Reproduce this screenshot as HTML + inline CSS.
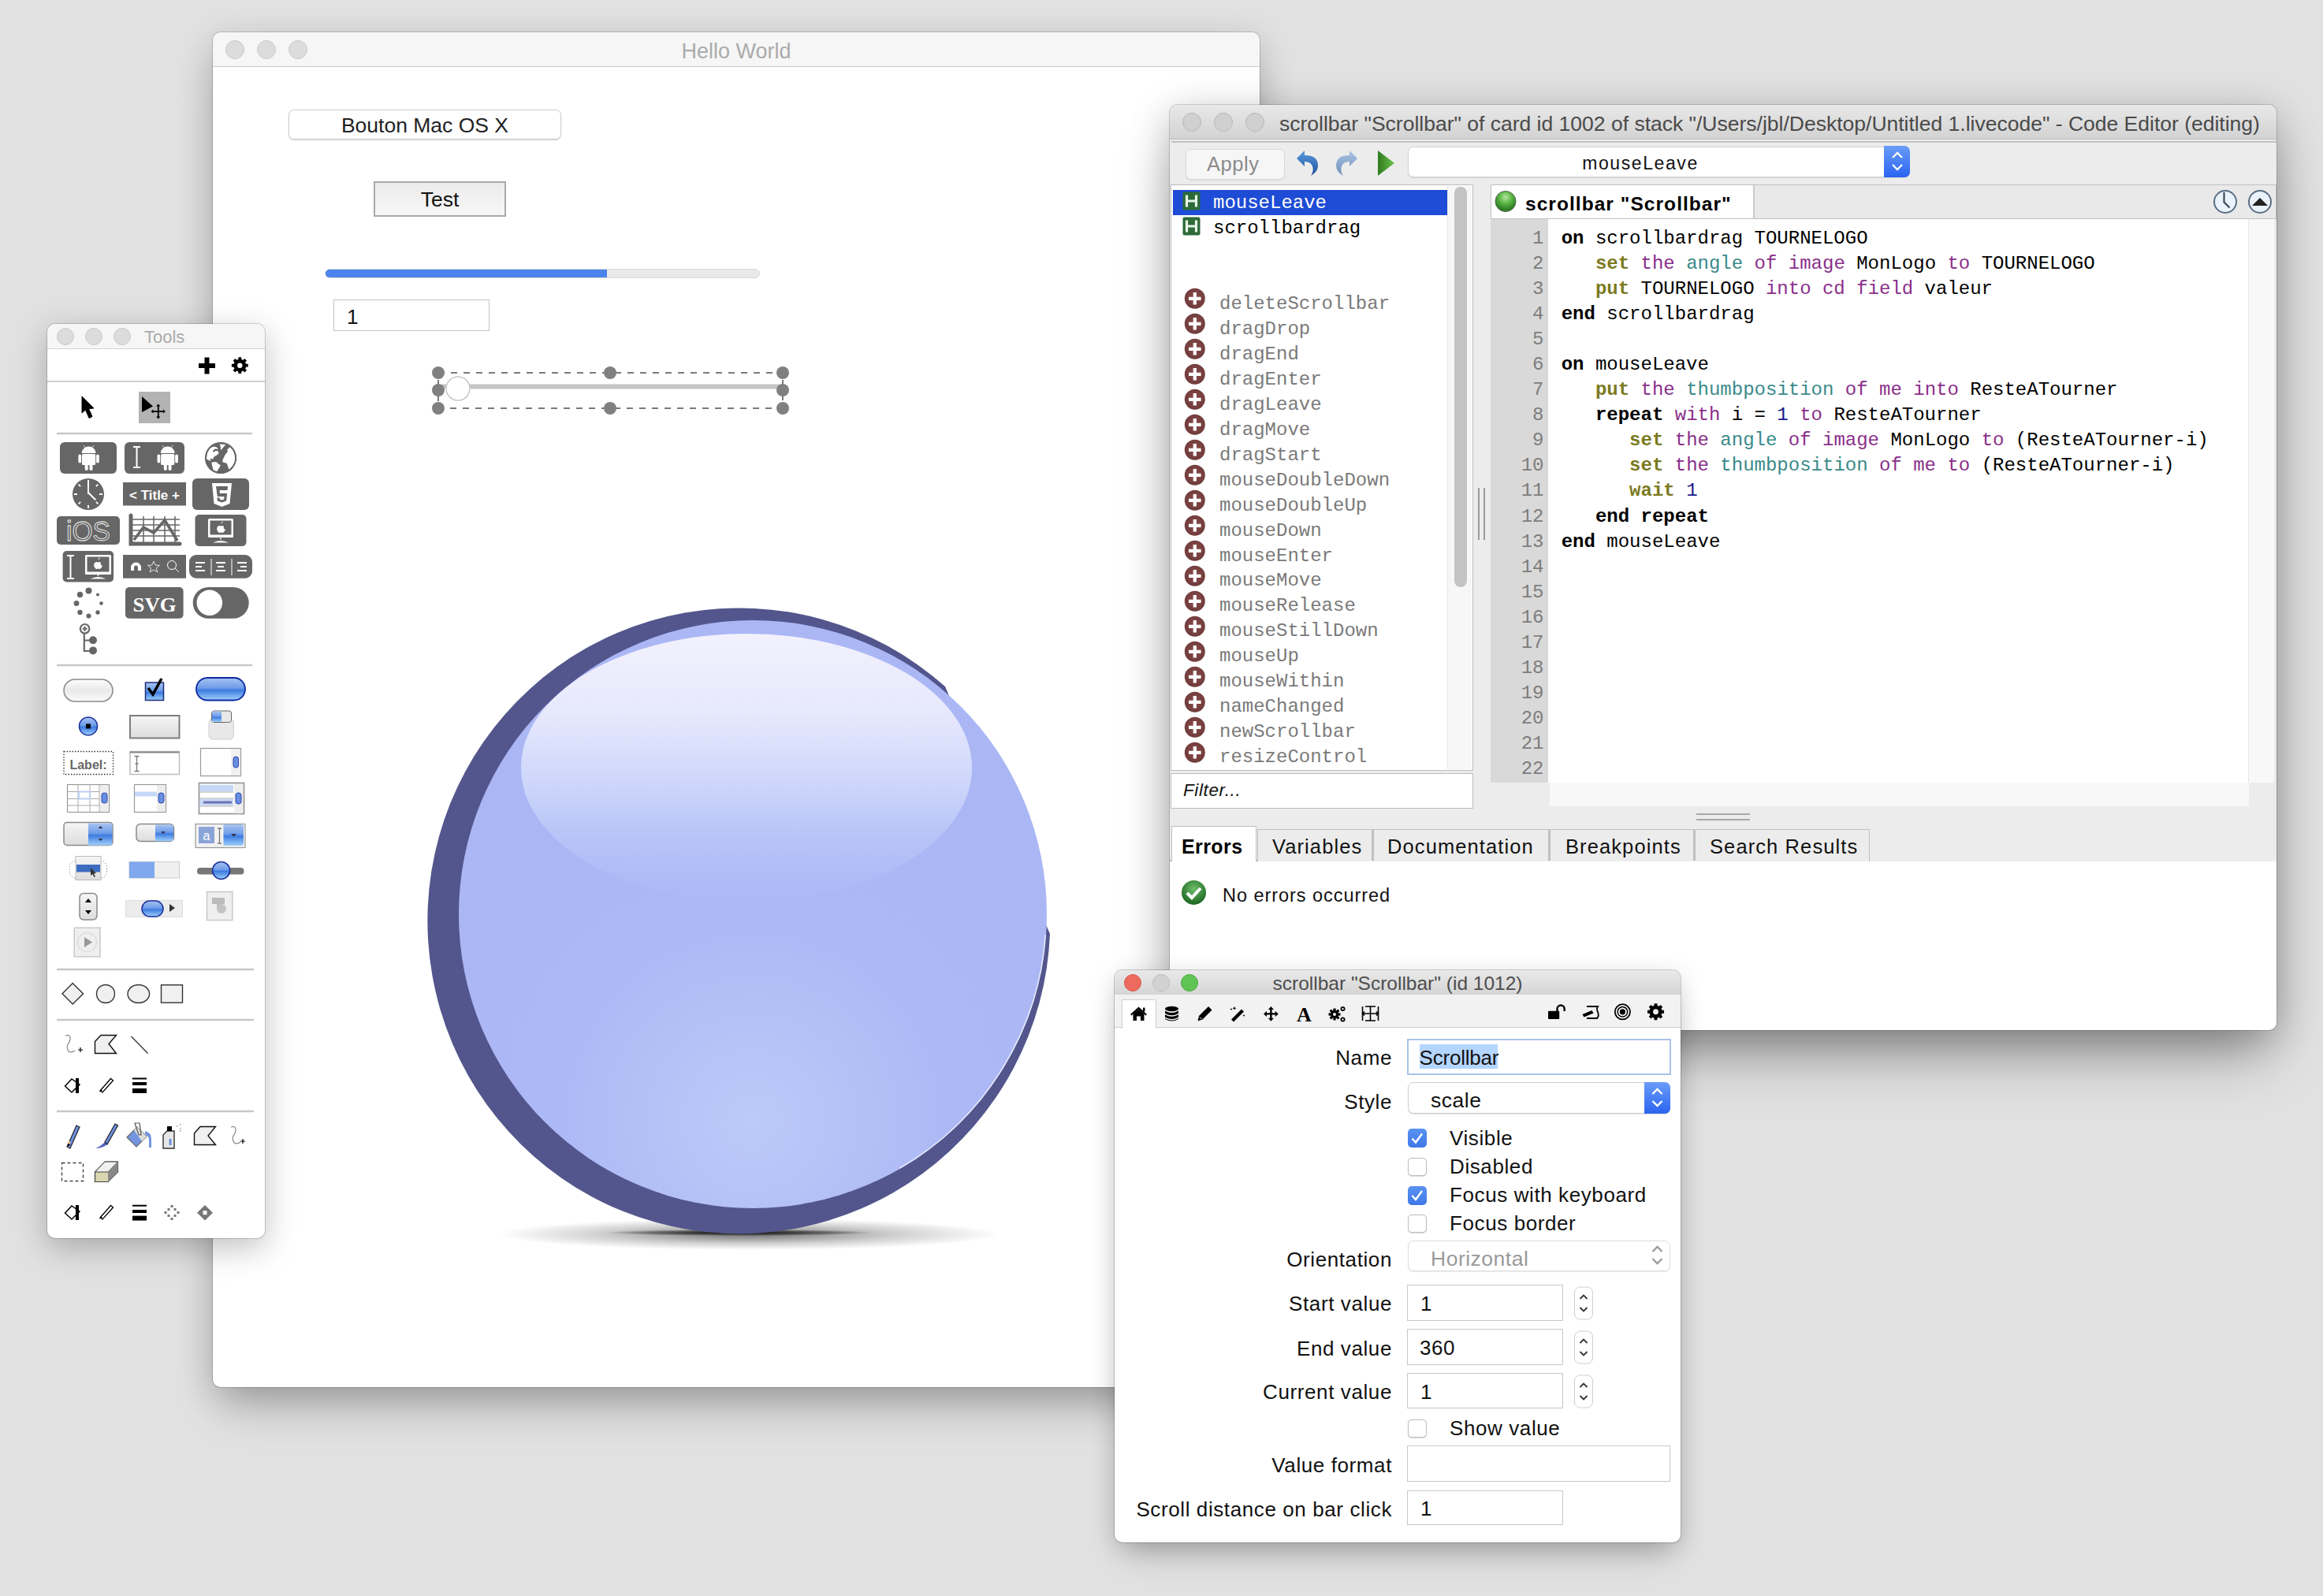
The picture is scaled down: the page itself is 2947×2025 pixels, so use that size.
<!DOCTYPE html>
<html><head><meta charset="utf-8">
<style>
*{box-sizing:border-box}
html,body{margin:0;padding:0}
body{width:2947px;height:2025px;background:#e1e1e1;position:relative;overflow:hidden;font-family:"Liberation Sans",sans-serif;color:#000}
.a{position:absolute}
.win{position:absolute;background:#fff;border-radius:10px;overflow:hidden}
.tl{position:absolute;border-radius:50%;background:#dcdcdc;border:1px solid #c9c9c9}
.t{position:absolute;white-space:nowrap;line-height:1}
.mono{font-family:"Liberation Mono",monospace}
.k1{color:#7b7a1f}.k2{color:#8a2f8a}.k3{color:#3a8a8a}.k4{color:#1a1a8c}
.sep{position:absolute;height:3px;background:#c8c8c8}
</style></head><body>

<!-- ============ HELLO WORLD WINDOW ============ -->
<div class="win" id="w1" style="left:270px;top:41px;width:1328px;height:1719px;box-shadow:0 0 0 1px rgba(0,0,0,.16),0 10px 44px rgba(0,0,0,.16),0 34px 54px -12px rgba(0,0,0,.22)">
  <div class="a" style="left:0;top:0;width:1328px;height:43.5px;background:#f6f6f6;border-bottom:1.5px solid #cbcbcb"></div>
  <div class="tl" style="left:16px;top:10px;width:24px;height:24px"></div>
  <div class="tl" style="left:56px;top:10px;width:24px;height:24px"></div>
  <div class="tl" style="left:96px;top:10px;width:24px;height:24px"></div>
  <div class="t" style="left:0;width:1328px;text-align:center;top:10.5px;font-size:27px;color:#ababab">Hello World</div>

  <!-- Bouton Mac OS X -->
  <div class="a" style="left:96px;top:98px;width:346px;height:38px;border-radius:7px;background:#fff;border:1px solid #cdcdcd;box-shadow:0 1px 1.5px rgba(0,0,0,.18)"></div>
  <div class="t" style="left:96px;width:346px;text-align:center;top:105px;font-size:26.5px;color:#222">Bouton Mac OS X</div>
  <!-- Test -->
  <div class="a" style="left:204px;top:189px;width:168px;height:45px;background:linear-gradient(#ececec,#f7f7f7);border:2px solid #a9a9a9"></div>
  <div class="t" style="left:204px;width:168px;text-align:center;top:199px;font-size:26.5px;color:#111">Test</div>
  <!-- progress -->
  <div class="a" style="left:142px;top:300px;width:552px;height:12px;border-radius:6px;background:#e9e9e9;border:1px solid #dadada;overflow:hidden">
    <div class="a" style="left:-1px;top:-1px;width:358px;height:12px;background:#4a84ec;border-radius:6px 0 0 6px"></div>
  </div>
  <!-- field -->
  <div class="a" style="left:153px;top:339px;width:198px;height:40px;border:1.5px solid #c4c4c4;background:#fff"></div>
  <div class="t" style="left:170px;top:348px;font-size:26px;color:#111">1</div>
  <!-- selected scrollbar -->
  <svg class="a" style="left:270px;top:419px" width="470" height="70" viewBox="540 460 470 70">
    <rect x="556" y="473" width="437" height="45" fill="none" stroke="#7a7a7a" stroke-width="2" stroke-dasharray="8 8"/>
    <line x1="560" y1="490.5" x2="992" y2="490.5" stroke="#c6c6c6" stroke-width="6"/>
    <line x1="556" y1="482" x2="556" y2="504" stroke="#7a7a7a" stroke-width="2"/>
    <line x1="993" y1="482" x2="993" y2="504" stroke="#7a7a7a" stroke-width="2"/>
    <g fill="#808080">
      <circle cx="556" cy="473" r="8"/><circle cx="774" cy="473" r="8"/><circle cx="993" cy="473" r="8"/>
      <circle cx="556" cy="495" r="8"/><circle cx="993" cy="495" r="8"/>
      <circle cx="556" cy="518" r="8"/><circle cx="774" cy="518" r="8"/><circle cx="993" cy="518" r="8"/>
    </g>
    <circle cx="581" cy="493" r="15" fill="#fff" stroke="#c8c8c8" stroke-width="1.5"/>
  </svg>
  <!-- sphere -->
  <svg class="a" style="left:200px;top:659px" width="900" height="920" viewBox="470 700 900 920">
    <defs>
      <radialGradient id="shd" cx="0.5" cy="0.5" r="0.5">
        <stop offset="0" stop-color="#000" stop-opacity=".55"/>
        <stop offset=".6" stop-color="#000" stop-opacity=".18"/>
        <stop offset="1" stop-color="#000" stop-opacity="0"/>
      </radialGradient>
      <radialGradient id="shd2" cx="0.5" cy="0.5" r="0.5">
        <stop offset="0" stop-color="#000" stop-opacity=".9"/>
        <stop offset=".7" stop-color="#000" stop-opacity=".35"/>
        <stop offset="1" stop-color="#000" stop-opacity="0"/>
      </radialGradient>
      <radialGradient id="lit" cx="0.5" cy="0.85" r="0.6">
        <stop offset="0" stop-color="#bccaf8"/>
        <stop offset=".55" stop-color="#adb9f5"/>
        <stop offset="1" stop-color="#abb7f5"/>
      </radialGradient>
      <linearGradient id="hil" x1="0" y1="0" x2="0" y2="1">
        <stop offset="0" stop-color="#f2f1fd"/>
        <stop offset=".3" stop-color="#e6e8fc"/>
        <stop offset=".6" stop-color="#c9d3fa"/>
        <stop offset="1" stop-color="#b0bdf7" stop-opacity=".15"/>
      </linearGradient>
    </defs>
    <ellipse cx="950" cy="1566" rx="318" ry="20" fill="url(#shd)"/>
    <ellipse cx="938" cy="1564" rx="170" ry="4" fill="url(#shd2)"/>
    <path d="M1332 1185 A395 397 0 1 1 1199 871 L1332 1185 Z" fill="#53568c"/>
    <circle cx="955" cy="1160" r="373" fill="url(#lit)"/>
    <ellipse cx="947" cy="974" rx="286" ry="170" fill="url(#hil)"/>
    <path d="M1326.4 1186.0 A372.3 372.3 0 0 1 1141.2 1482.4" fill="none" stroke="#fff" stroke-opacity=".75" stroke-width="1.5"/>
  </svg>
</div>

<!-- ============ TOOLS WINDOW ============ -->
<div class="win" id="w2" style="left:60px;top:411px;width:276px;height:1160px;box-shadow:0 12px 40px rgba(0,0,0,.25),0 0 0 1px rgba(0,0,0,.16)">
  <div class="a" style="left:0;top:0;width:276px;height:32px;background:#f6f6f6;border-bottom:1.5px solid #d4d4d4"></div>
  <div class="tl" style="left:12px;top:5px;width:22px;height:22px"></div>
  <div class="tl" style="left:48px;top:5px;width:22px;height:22px"></div>
  <div class="tl" style="left:84px;top:5px;width:22px;height:22px"></div>
  <div class="t" style="left:123px;top:6px;font-size:22px;color:#ababab">Tools</div>
  <svg class="a" style="left:0;top:0" width="276" height="1160" viewBox="60 411 276 1160">
    <defs>
      <linearGradient id="gw" x1="0" y1="0" x2="0" y2="1"><stop offset="0" stop-color="#fdfdfd"/><stop offset=".5" stop-color="#e9e9e9"/><stop offset="1" stop-color="#fafafa"/></linearGradient>
      <linearGradient id="gb" x1="0" y1="0" x2="0" y2="1"><stop offset="0" stop-color="#a9c4f2"/><stop offset=".45" stop-color="#6f9de8"/><stop offset=".55" stop-color="#3d7be0"/><stop offset="1" stop-color="#9fd0fb"/></linearGradient>
      <linearGradient id="gg" x1="0" y1="0" x2="0" y2="1"><stop offset="0" stop-color="#f6f6f6"/><stop offset="1" stop-color="#dcdcdc"/></linearGradient>
    </defs>
    <!-- toolbar -->
    <line x1="60" y1="484" x2="336" y2="484" stroke="#d0d0d0" stroke-width="2"/>
    <path d="M259.5 453.5h6v7.5h7.5v6h-7.5v7.5h-6v-7.5h-7.5v-6h7.5z" fill="#000"/>
    <path d="M312.06 461.77 L314.72 461.78 L314.72 465.62 L312.06 465.63 L311.15 467.83 L313.03 469.71 L310.31 472.43 L308.43 470.55 L306.23 471.46 L306.22 474.12 L302.38 474.12 L302.37 471.46 L300.17 470.55 L298.29 472.43 L295.57 469.71 L297.45 467.83 L296.54 465.63 L293.88 465.62 L293.88 461.78 L296.54 461.77 L297.45 459.57 L295.57 457.69 L298.29 454.97 L300.17 456.85 L302.37 455.94 L302.38 453.28 L306.22 453.28 L306.23 455.94 L308.43 456.85 L310.31 454.97 L313.03 457.69 L311.15 459.57Z M307.50 463.70 A3.2 3.2 0 1 0 301.10 463.70 A3.2 3.2 0 1 0 307.50 463.70Z" fill="#000" fill-rule="evenodd"/>
    <!-- pointer tools -->
    <path d="M104 503 L104 524 L108.5 520 L113 530.5 L117 528.5 L112.5 518.5 L119 518 Z" fill="#000" stroke="#000" stroke-width="1"/>
    <rect x="176" y="497" width="40" height="40" fill="#b3b3b3"/>
    <path d="M180 503 L180 523 L194 515.5 Z" fill="#000"/>
    <g stroke="#000" stroke-width="1.8" fill="none"><line x1="200.8" y1="514" x2="200.8" y2="530"/><line x1="193" y1="522" x2="208.6" y2="522"/></g><path d="M200.8 512.5l-2.6 3h5.2zM200.8 531.5l-2.6-3h5.2zM191.5 522l3-2.6v5.2zM210 522l-3-2.6v5.2z" fill="#000"/>
    <line x1="72" y1="550" x2="320" y2="550" stroke="#c8c8c8" stroke-width="2.5"/>
    <!-- widgets row1 -->
    <g fill="#666">
      <rect x="76" y="561" width="72" height="40" rx="6"/>
      <rect x="158" y="561" width="76" height="40" rx="6"/>
      <circle cx="280" cy="581" r="20"/>
      <circle cx="112" cy="627" r="20"/>
      <rect x="156" y="612" width="80" height="29.5"/>
      <rect x="244" y="607" width="72" height="40" rx="6"/>
      <rect x="72" y="655" width="80" height="36" rx="5"/>
      <rect x="247.5" y="653" width="65" height="40" rx="5"/>
      <rect x="79.6" y="699" width="64.5" height="39.5" rx="5"/>
      <rect x="156" y="704" width="80" height="29.7"/>
      <rect x="240" y="704" width="80" height="29.7" rx="9"/>
      <rect x="159" y="745" width="73.6" height="39.7" rx="5"/>
      <rect x="244.7" y="745" width="71" height="39.7" rx="19.8"/>
    </g>
    <g fill="#fff">
      <!-- android 1 -->
      <path d="M103.69999999999999 575 a8.9 8.4 0 0 1 17.8 0z"/><path d="M107.6 567.5 l-1.5-2.5 M117.6 567.5 l1.5-2.5" stroke="#fff" stroke-width=".8"/><rect x="104.0" y="576" width="17.2" height="14" rx="1.5"/><rect x="99.39999999999999" y="576.5" width="3.7" height="11" rx="1.8"/><rect x="122.1" y="576.5" width="3.7" height="11" rx="1.8"/><rect x="107.69999999999999" y="588" width="4" height="9" rx="2"/><rect x="113.5" y="588" width="4" height="9" rx="2"/>
      <!-- android 2 -->
      <path d="M203.79999999999998 575 a8.9 8.4 0 0 1 17.8 0z"/><path d="M207.7 567.5 l-1.5-2.5 M217.7 567.5 l1.5-2.5" stroke="#fff" stroke-width=".8"/><rect x="204.1" y="576" width="17.2" height="14" rx="1.5"/><rect x="199.5" y="576.5" width="3.7" height="11" rx="1.8"/><rect x="222.2" y="576.5" width="3.7" height="11" rx="1.8"/><rect x="207.79999999999998" y="588" width="4" height="9" rx="2"/><rect x="213.6" y="588" width="4" height="9" rx="2"/>
      <path d="M169 566h9v2h-3.5v24h3.5v2h-9v-2h3.5v-24h-3.5z"/>
      <!-- globe details -->
      <path d="M261.74 580.69 L262.83 573.80 L266.59 568.16 L271.60 566.59 L275.36 567.84 L276.93 569.72 L272.54 569.41 L270.04 571.92 L270.35 574.11 L272.54 572.54 L275.05 571.92 L276.93 572.86 L277.56 575.36 L275.36 577.24 L271.60 579.44 L269.72 582.88 L268.16 581.63 L266.28 582.57 L267.84 585.08 L264.40 583.82 L262.05 582.57Z M278.50 563.46 L286.33 564.09 L280.06 571.60 L279.75 566.28Z M291.34 566.90 L295.73 571.29 L298.55 578.81 L297.92 586.33 L295.73 591.03 L290.40 595.73 L287.89 587.89 L282.26 586.33 L282.57 583.20 L285.70 576.93 L289.15 572.54 L287.89 571.29Z M268.47 586.64 L272.54 586.02 L275.68 586.64 L276.93 588.83 L279.75 590.09 L278.81 592.59 L275.05 598.23 L270.66 596.67 L268.78 589.46Z" fill="#fff"/>
      <circle cx="280.06" cy="581" r="18.9" fill="none" stroke="#666" stroke-width="1.8"/>
      <!-- clock -->
      <rect x="111" y="609" width="2" height="18"/><path d="M111.5 626 l9 9 l1.5-1.5 l-9-9z"/>
      <rect x="111" y="641" width="2" height="4"/><rect x="94" y="626" width="4" height="2"/><rect x="126" y="626" width="4" height="2"/><line x1="121.90" y1="636.90" x2="124.37" y2="639.37" stroke="#fff" stroke-width="1.8"/><line x1="102.10" y1="636.90" x2="99.63" y2="639.37" stroke="#fff" stroke-width="1.8"/><line x1="102.10" y1="617.10" x2="99.63" y2="614.63" stroke="#fff" stroke-width="1.8"/><line x1="121.90" y1="617.10" x2="124.37" y2="614.63" stroke="#fff" stroke-width="1.8"/>
      <!-- html5 -->
      <path d="M269 613h25l-2.5 26l-10 4l-10-4z" fill="#fff"/>
    </g>
    <path d="M274 617h15l-.5 5h-10l.4 4h9.2l-.9 9.5l-5.7 2l-5.7-2l-.4-4h3.2l.2 2l2.7 1l2.7-1l.3-3.5h-8.7z" fill="#666"/>
    <text x="196" y="634" font-family="Liberation Sans" font-weight="bold" font-size="17" fill="#fff" text-anchor="middle">&lt; Title +</text>
    <text x="112" y="686" font-family="Liberation Sans" font-size="35" fill="none" stroke="#fff" stroke-width=".8" text-anchor="middle" textLength="56" lengthAdjust="spacingAndGlyphs">iOS</text>
    <!-- chart -->
    <g stroke="#666" fill="none">
      <path d="M166 654 V690 H228" stroke-width="5" stroke-linecap="round"/>
      <path d="M168 659H228 M168 666H228 M168 673H228 M168 680H228 M182 655V688 M195 655V688 M209 655V688 M222 655V688" stroke-width="1.5"/>
      <path d="M170 685 L182 669 L195 676 L209 660 L225 686" stroke-width="3.5"/>
    </g>
    <!-- monitor 1 -->
    <g fill="#fff">
      <rect x="264" y="658" width="32" height="24" rx="1.5"/><path d="M270 688.5 q10-5 20 0z"/><circle cx="280" cy="683.5" r="1"/>
    </g>
    <rect x="266.5" y="660.5" width="27" height="18" fill="#666"/>
    <path d="M280 664 q2-2 3-3 q0 2 -2 3 z M276 668 q4-2 4 0 q1-2 4 0 q-1 3 2 4 q-2 4-4 4 q-2-1-3 0 q-3 0-4-5z" fill="#fff"/>
    <!-- I + monitor -->
    <path d="M85 704h9v2h-3.5v27h3.5v2h-9v-2h3.5v-27h-3.5z" fill="#fff"/>
    <rect x="108" y="704" width="33" height="25" rx="1.5" fill="#fff"/><path d="M114.5 734.5 q10-5 20 0z" fill="#fff"/><circle cx="124.5" cy="729.8" r="1" fill="#fff"/>
    <rect x="110.5" y="706.5" width="28" height="19" fill="#666"/>
    <path d="M124 710 q2-2 3-3 q0 2 -2 3 z M120 714 q4-2 4 0 q1-2 4 0 q-1 3 2 4 q-2 4-4 4 q-2-1-3 0 q-3 0-4-5z" fill="#fff"/>
    <!-- icons box -->
    <path d="M166 724 v-4 a6.5 6.5 0 0 1 13 0 v4 h-4 v-4 a2.5 2.5 0 0 0 -5 0 v4z" fill="#fff"/>
    <path d="M195 712 l2.2 5 5.3.3 -4.1 3.4 1.4 5.2 -4.8-3 -4.8 3 1.4-5.2 -4.1-3.4 5.3-.3z" fill="none" stroke="#fff" stroke-width=".8"/>
    <circle cx="218" cy="717" r="5.5" fill="none" stroke="#fff" stroke-width="1"/><line x1="222" y1="721" x2="227" y2="726" stroke="#fff" stroke-width="1"/>
    <!-- alignment -->
    <g fill="#fff">
      <rect x="248" y="713" width="12" height="2"/><rect x="248" y="718" width="8" height="2"/><rect x="248" y="723" width="12" height="2"/>
      <rect x="267.5" y="709" width="1" height="21"/>
      <rect x="274" y="713" width="12" height="2"/><rect x="276" y="718" width="8" height="2"/><rect x="274" y="723" width="12" height="2"/>
      <rect x="293.5" y="709" width="1" height="21"/>
      <rect x="301" y="713" width="12" height="2"/><rect x="305" y="718" width="8" height="2"/><rect x="301" y="723" width="12" height="2"/>
    </g>
    <!-- spinner -->
    <g fill="#666">
      <circle cx="112.5" cy="749.5" r="4"/><circle cx="101.5" cy="754.5" r="3.7"/><circle cx="97" cy="765.5" r="3.4"/><circle cx="101.5" cy="777" r="3.2"/><circle cx="112.5" cy="781.5" r="3"/><circle cx="124" cy="777" r="2.7"/><circle cx="128.5" cy="765.5" r="2.3"/><circle cx="124" cy="754.5" r="2"/>
    </g>
    <text x="196" y="776" font-family="Liberation Serif" font-weight="bold" font-size="25" fill="#fff" text-anchor="middle" textLength="55" lengthAdjust="spacingAndGlyphs">SVG</text>
    <circle cx="265.8" cy="764.8" r="16.3" fill="#fff"/>
    <!-- tree -->
    <g stroke="#666" fill="none" stroke-width="2.2">
      <circle cx="107.6" cy="797.8" r="5.8"/>
      <path d="M106.8 804 V826 H116 M106.8 812.5 H116"/>
    </g>
    <path d="M104.5 797.8h6.2M107.6 794.7v6.2" stroke="#666" stroke-width="2"/>
    <circle cx="118" cy="812.3" r="5" fill="#666"/><circle cx="118" cy="825.4" r="5" fill="#666"/>
    <line x1="72" y1="844" x2="320" y2="844" stroke="#c8c8c8" stroke-width="2.5"/>

    <!-- classic controls -->
    <rect x="81" y="862" width="62" height="28" rx="14" fill="url(#gw)" stroke="#8a8a8a" stroke-width="1.5"/>
    <rect x="184.5" y="866" width="23" height="22.5" fill="url(#gb)" stroke="#1a2f7a" stroke-width="1.5"/>
    <path d="M188 873 l6 8 l11-20" fill="none" stroke="#000" stroke-width="3.5"/>
    <rect x="249" y="860" width="62" height="28.5" rx="14" fill="url(#gb)" stroke="#0b2aa0" stroke-width="1.8"/>
    <circle cx="112" cy="921.4" r="11.5" fill="url(#gb)" stroke="#1a2f9a" stroke-width="1.5"/><rect x="109" y="918.4" width="6" height="6" fill="#000"/>
    <rect x="165" y="908" width="62.5" height="28.5" fill="url(#gg)" stroke="#7d7d7d" stroke-width="2"/>
    <rect x="265" y="912" width="31.5" height="26" rx="5" fill="#e8e8e8" stroke="#d0d0d0"/>
    <rect x="268.5" y="902" width="25" height="14.5" rx="3" fill="#e8e8e8" stroke="#666" stroke-width="1"/><rect x="269" y="902.5" width="12" height="13.5" fill="url(#gb)"/>
    <rect x="81" y="953.5" width="62.5" height="29" fill="none" stroke="#333" stroke-width="1.3" stroke-dasharray="1.5 2"/>
    <text x="112" y="976" font-family="Liberation Sans" font-weight="bold" font-size="16" fill="#666" text-anchor="middle">Label:</text>
    <rect x="165" y="953.5" width="62.5" height="29" fill="#fff" stroke="#bdbdbd" stroke-width="1.5"/><line x1="165" y1="954.5" x2="227.5" y2="954.5" stroke="#888" stroke-width="2"/>
    <path d="M170.5 959.5h6M173.5 959.5v19M170.5 978.5h6M171.5 969h4" stroke="#777" stroke-width="1.3" fill="none"/>
    <rect x="254.5" y="949.5" width="51" height="35" fill="#fff" stroke="#999" stroke-width="1.2"/><rect x="293" y="950" width="12" height="34" fill="#f0f0f0"/><rect x="296" y="960" width="6.5" height="14" rx="3" fill="#6a8ee0" stroke="#2a4ab0"/>
    <!-- table -->
    <rect x="85.5" y="995.5" width="53" height="35" fill="#fff" stroke="#999" stroke-width="1.2"/>
    <path d="M85.5 1004.5H126 M85.5 1013.5H126 M85.5 1022H126 M99 995.5V1030.5 M114 995.5V1030.5 M126 995.5V1030.5" stroke="#aaa" stroke-width="1"/>
    <rect x="100" y="1004.5" width="14" height="9" fill="none" stroke="#bcd0f5" stroke-width="2"/>
    <rect x="127" y="996" width="11" height="34" fill="#eee"/><rect x="129" y="1006" width="7" height="13" rx="3" fill="#6a8ee0" stroke="#2a4ab0"/>
    <rect x="170.5" y="995.5" width="40" height="35" fill="#fff" stroke="#999" stroke-width="1.2"/><rect x="171" y="1004.5" width="28" height="6" fill="#c6d8f8"/>
    <rect x="199" y="996" width="11" height="34" fill="#eee"/><rect x="201" y="1006" width="7" height="13" rx="3" fill="#6a8ee0" stroke="#2a4ab0"/>
    <rect x="252.5" y="993.5" width="57" height="39" fill="#fff" stroke="#999" stroke-width="1.8"/>
    <rect x="254" y="996" width="42" height="8" fill="#c6d8f8"/><rect x="253" y="1014" width="43" height="8" fill="#c6d8f8"/><rect x="258" y="1016.5" width="36" height="3" fill="#7070b0"/>
    <path d="M253 1005H296 M253 1013H296 M253 1023H296" stroke="#aaa"/>
    <rect x="297" y="995" width="11" height="37" fill="#eee"/><rect x="299" y="1006" width="7" height="14" rx="3" fill="#6a8ee0" stroke="#2a4ab0"/>
    <!-- row5 -->
    <rect x="81" y="1043.5" width="62" height="29" rx="4" fill="url(#gg)" stroke="#8a8a8a" stroke-width="1.5"/>
    <path d="M112 1044.5h27a3.5 3.5 0 0 1 3.5 3.5v21a3.5 3.5 0 0 1-3.5 3.5h-27z" fill="url(#gb)"/>
    <path d="M124.5 1051l3-3 3 3zM124.5 1064l3 3 3-3z" fill="#334"/>
    <rect x="173" y="1045.5" width="47.5" height="22" rx="5" fill="url(#gg)" stroke="#8a8a8a" stroke-width="1.5"/>
    <path d="M197 1046.3h19.5a3.5 3.5 0 0 1 3.5 3.5v14a3.5 3.5 0 0 1-3.5 3.5h-19.5z" fill="url(#gb)"/>
    <path d="M204 1055h6l-3 3z" fill="#334"/>
    <rect x="248" y="1045.5" width="63" height="30" fill="#f2f2f2" stroke="#999" stroke-width="1.2"/>
    <rect x="252" y="1049" width="20" height="21" fill="#8aa4d8"/><text x="262" y="1066" font-family="Liberation Sans" font-size="16" fill="#fff" text-anchor="middle">a</text>
    <path d="M276 1051h5M278.5 1051v19M276 1070h5" stroke="#777" stroke-width="1.3"/>
    <path d="M283.5 1046h22a3.5 3.5 0 0 1 3.5 3.5v20a3.5 3.5 0 0 1-3.5 3.5h-22z" fill="url(#gb)"/>
    <path d="M293 1058h7l-3.5 3.5z" fill="#334"/>
    <!-- row6 -->
    <rect x="88.3" y="1092" width="47.2" height="22" rx="8" fill="none" stroke="#555" stroke-width="1" stroke-dasharray="1 2.5"/>
    <rect x="96" y="1086.5" width="32" height="30" fill="url(#gg)" stroke="#bbb"/>
    <rect x="97" y="1097" width="30" height="9.5" fill="#3c6cc0"/>
    <path d="M115 1101 v10 l2.5-2 2 4 1.5-.8 -2-3.8 3-.4z" fill="#333"/>
    <rect x="164" y="1093.5" width="63.5" height="20.5" fill="#efefef" stroke="#ccc"/>
    <rect x="164" y="1093.5" width="32" height="20.5" fill="#7fa8ee"/>
    <rect x="250" y="1101" width="59.5" height="8.5" rx="4" fill="#777"/>
    <circle cx="280.6" cy="1104.4" r="11" fill="url(#gb)" stroke="#1a2f9a" stroke-width="1.5"/>
    <!-- row7 -->
    <rect x="101" y="1133.5" width="22" height="33.5" rx="5" fill="url(#gg)" stroke="#8a8a8a" stroke-width="1.5"/>
    <path d="M108 1145l4-5 4 5zM108 1155l4 5 4-5z" fill="#000"/>
    <rect x="159.5" y="1142.4" width="72" height="21" fill="#ececec" stroke="#ddd"/>
    <rect x="180" y="1143" width="27" height="20" rx="10" fill="url(#gb)" stroke="#1a2f9a" stroke-width="1.5"/>
    <path d="M215 1147v10l7-5z" fill="#333"/>
    <rect x="262.5" y="1131.5" width="32.3" height="36" fill="#efefef" stroke="#c8c8c8" stroke-width="1.5"/>
    <path d="M269 1139h16v8h-4v5h-6v-5h-6z" fill="#bbb"/><circle cx="281" cy="1153" r="6" fill="#c4c4c4"/>
    <rect x="94.2" y="1177.2" width="32.8" height="36.6" fill="#efefef" stroke="#c8c8c8" stroke-width="1.5"/>
    <circle cx="110.5" cy="1195.5" r="12" fill="none" stroke="#ddd" stroke-width="1.5"/><path d="M107 1189v13l10-6.5z" fill="#999"/>
    <line x1="72" y1="1230" x2="322" y2="1230" stroke="#c8c8c8" stroke-width="2.5"/>
    <!-- shapes -->
    <g fill="#f0f0f0" stroke="#333" stroke-width="1.4">
      <path d="M92.2 1247.5 L105.5 1260.7 L92.2 1274 L79 1260.7Z"/>
      <circle cx="134" cy="1261" r="11.5"/>
      <ellipse cx="175.8" cy="1261" rx="13.8" ry="11.5"/>
      <rect x="204.5" y="1249.7" width="27" height="22.5"/>
    </g>
    <line x1="72" y1="1294" x2="322" y2="1294" stroke="#c8c8c8" stroke-width="2.5"/>
    <path d="M83 1314 q6-2 6 3 q0 5-3 8 q-2 4 1 9 q4 2 8-1" fill="none" stroke="#888" stroke-width="1.2"/>
    <path d="M99 1332h6M102 1329v6" stroke="#000" stroke-width="1.2"/>
    <path d="M120.5 1321.5 L128 1313.5 H147.5 L138 1324.5 L147.5 1336.5 H120.5Z" fill="#f0f0f0" stroke="#111" stroke-width="1.4"/>
    <line x1="166.5" y1="1315" x2="187.5" y2="1336.5" stroke="#444" stroke-width="1.6"/>
    <path d="M82.5 1378 L91 1369 L101 1376 L91 1386Z" fill="none" stroke="#000" stroke-width="1.5"/><path d="M96 1368h4v19h-4z" fill="#000"/>
    <path d="M127 1384 L140.5 1368.5 L143.5 1371 L130 1386Z" fill="#fff" stroke="#000" stroke-width="1.3"/><path d="M126 1385.5l2-3.5 2 2z" fill="#000"/>
    <rect x="168" y="1367.5" width="18" height="2" fill="#000"/><rect x="168" y="1373" width="18" height="4" fill="#000"/><rect x="168" y="1381" width="18" height="6" fill="#000"/>
    <line x1="72" y1="1410" x2="322" y2="1410" stroke="#c8c8c8" stroke-width="2.5"/>
    <!-- paint tools -->
    <path d="M85 1455 L97 1428 L101 1430 L89 1457Z" fill="#6f8fe0" stroke="#222" stroke-width="1.2"/><path d="M85 1455l1.5-4 3 1.3z" fill="#000"/><rect x="86" y="1448" width="3" height="3" fill="#f3c08a"/>
    <path d="M121 1457 q6-2 12-8 l3 3 q-6 5-15 5z" fill="#5060c0"/><path d="M133 1449 L146 1426 L149.5 1428 L136 1452Z" fill="#6f8fe0" stroke="#222" stroke-width="1.2"/>
    <path d="M161 1443 L174 1430 L186 1442 L173 1455Z" fill="#7395e0" stroke="#666" stroke-width="1.2"/><path d="M170 1434 L174 1430 L186 1442 L180 1448Z" fill="#ddd"/><path d="M171 1425h6l2 15h-3z" fill="none" stroke="#555" stroke-width="1.2"/><path d="M184 1435 q8 2 8 10 v11 h-3 v-10 q0-5-5-6z" fill="#7395e0"/>
    <path d="M207 1457 V1440 L212 1435 H221 V1457Z" fill="#e6e6e6" stroke="#333" stroke-width="1.4"/><rect x="212" y="1429" width="6" height="6" fill="#000"/><rect x="214.5" y="1445" width="3" height="8" fill="#6f8fe0"/>
    <g fill="#999"><rect x="224" y="1428" width="1.5" height="1.5"/><rect x="228" y="1426" width="1.5" height="1.5"/><rect x="228" y="1431" width="1.5" height="1.5"/><rect x="228" y="1434" width="1.5" height="1.5"/></g>
    <path d="M246.5 1438 L254 1429.5 H273.5 L264 1441 L273.5 1452.5 H246.5Z" fill="#f0f0f0" stroke="#111" stroke-width="1.4"/>
    <path d="M293 1430 q6-2 6 3 q0 5-3 8 q-2 4 1 9 q4 2 8-1" fill="none" stroke="#888" stroke-width="1.2"/><path d="M305 1448h6M308 1445v6" stroke="#000" stroke-width="1.2"/>
    <rect x="78.5" y="1475.5" width="27" height="23" fill="none" stroke="#444" stroke-width="1.4" stroke-dasharray="4 3"/>
    <path d="M120.5 1487 L133 1474 H149.5 V1487 L137 1499.5 H120.5Z" fill="#d9d6b0" stroke="#444" stroke-width="1.2"/><path d="M120.5 1487 L133 1474 H149.5 L137 1487Z" fill="#f0f0f0" stroke="#444" stroke-width="1"/><path d="M137 1487 L149.5 1474 V1487 L137 1499.5Z" fill="#888"/>
    <path d="M82.5 1539 L91 1530 L101 1537 L91 1547Z" fill="none" stroke="#000" stroke-width="1.5"/><path d="M96 1529h4v19h-4z" fill="#000"/>
    <path d="M127 1545 L140.5 1529.5 L143.5 1532 L130 1547Z" fill="#fff" stroke="#000" stroke-width="1.3"/><path d="M126 1546.5l2-3.5 2 2z" fill="#000"/>
    <rect x="168" y="1528.7" width="18" height="2" fill="#000"/><rect x="168" y="1535" width="18" height="4" fill="#000"/><rect x="168" y="1542.6" width="18" height="6" fill="#000"/>
    <g fill="#777"><rect x="216.5" y="1529" width="3" height="3"/><rect x="212.5" y="1533" width="3" height="3"/><rect x="220.5" y="1533" width="3" height="3"/><rect x="208.5" y="1537" width="3" height="3"/><rect x="224.5" y="1537" width="3" height="3"/><rect x="212.5" y="1541" width="3" height="3"/><rect x="220.5" y="1541" width="3" height="3"/><rect x="216.5" y="1545" width="3" height="3"/></g>
    <path d="M260 1529 L270 1538.7 L260 1548.5 L250 1538.7Z" fill="#777"/><rect x="257.5" y="1536.2" width="5" height="5" fill="#fff"/>
  </svg>
</div>

<!-- ============ CODE EDITOR WINDOW ============ -->
<div class="win" id="w3" style="left:1484px;top:133px;width:1404px;height:1174px;background:#ececec;box-shadow:0 0 0 1px rgba(0,0,0,.16),0 10px 50px rgba(0,0,0,.22),0 42px 70px -14px rgba(0,0,0,.34)">
  <div class="a" style="left:0;top:0;width:1404px;height:44px;background:linear-gradient(#e8e8e8,#d3d3d3);border-bottom:1px solid #bdbdbd"></div>
  <div class="tl" style="left:16px;top:10px;width:24px;height:24px;background:#d0d0d0;border-color:#b8b8b8"></div>
  <div class="tl" style="left:56px;top:10px;width:24px;height:24px;background:#d0d0d0;border-color:#b8b8b8"></div>
  <div class="tl" style="left:96px;top:10px;width:24px;height:24px;background:#d0d0d0;border-color:#b8b8b8"></div>
  <div class="t" style="left:139px;top:10.5px;font-size:26.5px;color:#4a4a4a">scrollbar "Scrollbar" of card id 1002 of stack "/Users/jbl/Desktop/Untitled 1.livecode" - Code Editor (editing)</div>
  <div class="a" style="left:-1484px;top:-133px;width:2947px;height:2025px">
    <!-- toolbar -->
    <div class="a" style="left:1486px;top:179px;width:1402px;height:2px;background:#c2c2c2"></div>
    <div class="a" style="left:1503.5px;top:188.5px;width:126.5px;height:39px;border-radius:7px;background:#f6f6f6;border:1px solid #dadada;box-shadow:0 1px 1px rgba(0,0,0,.08)"></div>
    <div class="t" style="left:1501px;width:126.5px;text-align:center;top:196px;font-size:25.5px;letter-spacing:.5px;color:#8a8a8a">Apply</div>
    <svg class="a" style="left:1640px;top:186px" width="140" height="42" viewBox="1640 186 140 42">
      <defs>
        <linearGradient id="ub" x1="0" y1="0" x2="0" y2="1"><stop offset="0" stop-color="#5a9ae0"/><stop offset="1" stop-color="#1d4f9a"/></linearGradient>
        <linearGradient id="rb" x1="0" y1="0" x2="0" y2="1"><stop offset="0" stop-color="#a9c3e3"/><stop offset="1" stop-color="#6f8fb8"/></linearGradient>
        <linearGradient id="pg" x1="0" y1="0" x2="1" y2="0"><stop offset="0" stop-color="#2f7a1f"/><stop offset="1" stop-color="#6cc24a"/></linearGradient>
      </defs>
      <path d="M1645 201 L1655 191 L1655 197 Q1672 197 1672 210 Q1672 218 1663 223 Q1667 217 1665 211 Q1663 205 1655 205 L1655 211 Z" fill="url(#ub)"/>
      <path d="M1722 201 L1712 191 L1712 197 Q1695 197 1695 210 Q1695 218 1704 223 Q1700 217 1702 211 Q1704 205 1712 205 L1712 211 Z" fill="url(#rb)"/>
      <path d="M1748 191 L1769 207 L1748 223 Z" fill="url(#pg)"/>
    </svg>
    <div class="a" style="left:1785.5px;top:185.5px;width:637px;height:39.5px;border-radius:7px;background:#fff;border:1px solid #d2d2d2;box-shadow:0 1px 1px rgba(0,0,0,.1)"></div>
    <div class="a" style="left:2389.5px;top:185px;width:33.5px;height:40px;border-radius:0 7px 7px 0;background:linear-gradient(#6a9cf8,#2a64f0)"></div>
    <svg class="a" style="left:2389.5px;top:185px" width="34" height="40" viewBox="0 0 34 40"><path d="M11 15 L17 9 L23 15 M11 24 L17 30 L23 24" fill="none" stroke="#fff" stroke-width="2.3"/></svg>
    <div class="t" style="left:1779px;width:604px;text-align:center;top:196px;font-size:23px;letter-spacing:1.6px;color:#111">mouseLeave</div>

    <!-- handler list -->
    <div class="a" style="left:1485px;top:234px;width:383.5px;height:743.5px;background:#fff;border:1.5px solid #bdbdbd"></div>
    <div class="a" style="left:1836px;top:235.5px;width:31px;height:740.5px;background:#f7f7f7;border-left:1px solid #e6e6e6"></div>
    <div class="a" style="left:1845px;top:237px;width:16px;height:508px;border-radius:8px;background:#c3c3c3"></div>
    <div class="a" style="left:1488px;top:241px;width:348px;height:32px;background:#1e4cd6"></div>
    <svg class="a" style="left:1485px;top:234px" width="350" height="742" viewBox="1485 234 350 742">
      <defs>
        <radialGradient id="pl" cx=".5" cy=".45" r=".55"><stop offset="0" stop-color="#8a4a4a"/><stop offset="1" stop-color="#6f3b3b"/></radialGradient>
      </defs>
      <g>
        <rect x="1500.5" y="243.5" width="22" height="23" rx="2" fill="#2d6a39"/><path d="M1505.5 247.5v15M1517.5 247.5v15M1505.5 255h12" stroke="#e8f6e8" stroke-width="3.2"/>
        <rect x="1500.5" y="275.5" width="22" height="23" rx="2" fill="#2d6a39"/><path d="M1505.5 279.5v15M1517.5 279.5v15M1505.5 287h12" stroke="#e8f6e8" stroke-width="3.2"/>
      </g>
      <g id="plus">
        <circle cx="1515.8" cy="378.8" r="13" fill="url(#pl)"/><path d="M1515.8 371v15.6M1508 378.8h15.6" stroke="#fff" stroke-width="4.2"/>
      </g>
      <use href="#plus" y="32"/><use href="#plus" y="64"/><use href="#plus" y="96"/><use href="#plus" y="128"/><use href="#plus" y="160"/><use href="#plus" y="192"/><use href="#plus" y="224"/><use href="#plus" y="256"/><use href="#plus" y="288"/><use href="#plus" y="320"/><use href="#plus" y="352"/><use href="#plus" y="384"/><use href="#plus" y="416"/><use href="#plus" y="448"/><use href="#plus" y="480"/><use href="#plus" y="512"/><use href="#plus" y="544"/><use href="#plus" y="576"/>
    </svg>
    <div class="a mono" style="left:1539px;top:242px;font-size:24px;line-height:32px;white-space:pre;color:#000"><span style="color:#fff">mouseLeave</span>
scrollbardrag</div>
    <div class="a mono" style="left:1547px;top:370px;font-size:24px;line-height:31.95px;white-space:pre;color:#7a7a7a">deleteScrollbar
dragDrop
dragEnd
dragEnter
dragLeave
dragMove
dragStart
mouseDoubleDown
mouseDoubleUp
mouseDown
mouseEnter
mouseMove
mouseRelease
mouseStillDown
mouseUp
mouseWithin
nameChanged
newScrollbar
resizeControl</div>
    <!-- filter -->
    <div class="a" style="left:1485px;top:980.5px;width:383.5px;height:45px;background:#fff;border:1.5px solid #bdbdbd"></div>
    <div class="t" style="left:1501px;top:992px;font-size:22.5px;font-style:italic;letter-spacing:.6px;color:#111">Filter...</div>
    <!-- splitter handle -->
    <div class="a" style="left:1875px;top:619px;width:2px;height:66px;background:#9a9a9a"></div>
    <div class="a" style="left:1882px;top:619px;width:2px;height:66px;background:#9a9a9a"></div>

    <!-- script header -->
    <div class="a" style="left:1890.5px;top:234px;width:997px;height:44px;background:#e9e9e9;border:1.5px solid #c0c0c0"></div>
    <div class="a" style="left:1890.5px;top:234px;width:335px;height:44px;background:#fff;border:1.5px solid #c0c0c0;border-right:2px solid #c8c8c8"></div>
    <svg class="a" style="left:1894px;top:240px" width="32" height="32" viewBox="1894 240 32 32">
      <defs><radialGradient id="gball" cx=".5" cy=".3" r=".6"><stop offset="0" stop-color="#b6e6a0"/><stop offset=".5" stop-color="#5cb848"/><stop offset="1" stop-color="#2e7f25"/></radialGradient></defs>
      <circle cx="1910" cy="255.5" r="13" fill="url(#gball)" stroke="#4c6b48" stroke-width="1"/>
    </svg>
    <div class="t" style="left:1935px;top:247px;font-size:24.5px;font-weight:bold;letter-spacing:1.05px;color:#000">scrollbar "Scrollbar"</div>
    <svg class="a" style="left:2800px;top:236px" width="88" height="40" viewBox="2800 236 88 40">
      <circle cx="2823" cy="256" r="14" fill="#eaf3fb" stroke="#5a6e86" stroke-width="2"/>
      <path d="M2821.5 244v12.5l7 7" fill="none" stroke="#3a4a5a" stroke-width="2.2"/>
      <circle cx="2867" cy="256" r="14" fill="#eaf3fb" stroke="#5a6e86" stroke-width="2"/>
      <path d="M2857 261h20l-10-10z" fill="#222"/>
    </svg>
    <!-- gutter + code -->
    <div class="a" style="left:1890.5px;top:278px;width:73.5px;height:714.5px;background:#d9d9d9"></div>
    <div class="a" style="left:1964px;top:278px;width:888px;height:714.5px;background:#fff"></div>
    <div class="a" style="left:2852px;top:278px;width:33px;height:715px;background:#f8f8f8;border-left:1px solid #e6e6e6"></div>
    <div class="a" style="left:1966px;top:993px;width:887px;height:30px;background:#f8f8f8"></div>
    <div class="a mono" style="left:1890.5px;top:287px;width:68px;text-align:right;font-size:24px;line-height:32.05px;white-space:pre;color:#7d7d7d">1
2
3
4
5
6
7
8
9
10
11
12
13
14
15
16
17
18
19
20
21
22</div>
    <div class="a mono" style="left:1980.7px;top:287px;font-size:24px;line-height:32.05px;white-space:pre;color:#000"><b>on</b> scrollbardrag TOURNELOGO
   <b class="k1">set</b> <span class="k2">the</span> <span class="k3">angle</span> <span class="k2">of</span> <span class="k2">image</span> MonLogo <span class="k2">to</span> TOURNELOGO
   <b class="k1">put</b> TOURNELOGO <span class="k2">into</span> <span class="k2">cd</span> <span class="k2">field</span> valeur
<b>end</b> scrollbardrag

<b>on</b> mouseLeave
   <b class="k1">put</b> <span class="k2">the</span> <span class="k3">thumbposition</span> <span class="k2">of</span> <span class="k2">me</span> <span class="k2">into</span> ResteATourner
   <b>repeat</b> <span class="k2">with</span> i = <span class="k4">1</span> <span class="k2">to</span> ResteATourner
      <b class="k1">set</b> <span class="k2">the</span> <span class="k3">angle</span> <span class="k2">of</span> <span class="k2">image</span> MonLogo <span class="k2">to</span> (ResteATourner-i)
      <b class="k1">set</b> <span class="k2">the</span> <span class="k3">thumbposition</span> <span class="k2">of</span> <span class="k2">me</span> <span class="k2">to</span> (ResteATourner-i)
      <b class="k1">wait</b> <span class="k4">1</span>
   <b>end repeat</b>
<b>end</b> mouseLeave</div>
    <!-- h splitter handle -->
    <div class="a" style="left:2152px;top:1032px;width:68px;height:2px;background:#a8a8a8"></div>
    <div class="a" style="left:2152px;top:1039px;width:68px;height:2px;background:#a8a8a8"></div>
    <!-- tabs -->
    <div class="a" style="left:1484px;top:1091px;width:888px;height:2px;background:#bdbdbd"></div>
    <div class="a" style="left:1595px;top:1051.5px;width:777px;height:41px;border:1.5px solid #c0c0c0;border-bottom:none;background:#ececec"></div>
    <div class="a" style="left:1739.5px;top:1051.5px;width:3px;height:40px;background:#c0c0c0"></div>
    <div class="a" style="left:1964px;top:1051.5px;width:3px;height:40px;background:#c0c0c0"></div>
    <div class="a" style="left:2148px;top:1051.5px;width:3px;height:40px;background:#c0c0c0"></div>
    <div class="a" style="left:1485.5px;top:1048px;width:108px;height:45px;background:#fff;border:1.5px solid #c0c0c0;border-bottom:none"></div>
    <div class="t" style="left:1499px;top:1062px;font-size:25px;font-weight:bold;letter-spacing:.4px;color:#000">Errors</div>
    <div class="t" style="left:1614px;top:1062px;font-size:25.5px;letter-spacing:1.1px;color:#111">Variables</div>
    <div class="t" style="left:1760px;top:1062px;font-size:25.5px;letter-spacing:1.1px;color:#111">Documentation</div>
    <div class="t" style="left:1986px;top:1062px;font-size:25.5px;letter-spacing:1.1px;color:#111">Breakpoints</div>
    <div class="t" style="left:2169px;top:1062px;font-size:25.5px;letter-spacing:1.1px;color:#111">Search Results</div>
    <div class="a" style="left:1484px;top:1093px;width:1404px;height:214px;background:#fff"></div>
    <svg class="a" style="left:1496px;top:1114px" width="38" height="38" viewBox="1496 1114 38 38">
      <defs><radialGradient id="chk" cx=".5" cy=".35" r=".6"><stop offset="0" stop-color="#6fbf6a"/><stop offset="1" stop-color="#1f6a25"/></radialGradient></defs>
      <circle cx="1514.5" cy="1132.4" r="15.5" fill="url(#chk)"/>
      <path d="M1506 1133 l6 6 l11-12" fill="none" stroke="#fff" stroke-width="4"/>
    </svg>
    <div class="t" style="left:1551px;top:1125px;font-size:23.5px;letter-spacing:.95px;color:#111">No errors occurred</div>
  </div>
</div>

<!-- ============ PROPERTY INSPECTOR ============ -->
<div class="win" id="w4" style="left:1414px;top:1231px;width:718px;height:726px;box-shadow:0 0 0 1px rgba(0,0,0,.18),0 6px 30px rgba(0,0,0,.15),0 26px 40px -14px rgba(0,0,0,.22)">
  <div class="a" style="left:0;top:0;width:718px;height:32px;background:linear-gradient(#e9e9e9,#d5d5d5);border-bottom:1px solid #c4c4c4"></div>
  <div class="tl" style="left:12px;top:5px;width:22px;height:22px;background:#ed6a5e;border-color:#d9574b"></div>
  <div class="tl" style="left:48px;top:5px;width:22px;height:22px;background:#d2d2d2;border-color:#bdbdbd"></div>
  <div class="tl" style="left:84px;top:5px;width:22px;height:22px;background:#5fc454;border-color:#4aa83f"></div>
  <div class="t" style="left:0;width:718px;text-align:center;top:4.5px;font-size:24.5px;color:#4d4d4d">scrollbar "Scrollbar" (id 1012)</div>
  <div class="a" style="left:-1414px;top:-1231px;width:2947px;height:2025px">
    <!-- toolbar -->
    <div class="a" style="left:1414px;top:1262px;width:718px;height:42px;background:#f2f2f2;border-bottom:1.5px solid #cdcdcd"></div>
    <div class="a" style="left:1423px;top:1268px;width:44px;height:37px;background:#fff;border:1.5px solid #d0d0d0;border-bottom:none"></div>
    <svg class="a" style="left:1414px;top:1262px" width="718" height="42" viewBox="1414 1262 718 42">
      <g fill="#000">
        <!-- home -->
        <path d="M1434 1287 L1444.5 1277.5 L1455 1287 L1453.5 1288.5 L1444.5 1280.5 L1435.5 1288.5Z"/>
        <path d="M1437.5 1286.5 L1444.5 1280.5 L1451.5 1286.5 V1295 H1447 V1289.5 H1442 V1295 H1437.5Z"/>
        <rect x="1450" y="1278.5" width="2.5" height="5"/>
        <!-- db -->
        <ellipse cx="1486.5" cy="1280" rx="8.5" ry="3.2"/>
        <path d="M1478 1282.5 q8.5 5 17 0 v3.3 q-8.5 5 -17 0z M1478 1287.3 q8.5 5 17 0 v3.3 q-8.5 5 -17 0z M1478 1292 q8.5 5 17 0 v1 q-8.5 5 -17 0z"/>
        <!-- pencil -->
        <path d="M1519.5 1295.5 L1521 1289 L1533 1277 L1537.5 1281.5 L1525.5 1293.5Z"/>
        <path d="M1522 1290.5 l2.5 2.5" stroke="#fff" stroke-width="1"/>
        <!-- wand -->
        <path d="M1562 1293.5 L1575 1280.5 L1578 1283.5 L1565 1296.5Z"/>
        <path d="M1566 1277l.7 1.6 1.6.7-1.6.7-.7 1.6-.7-1.6-1.6-.7 1.6-.7z M1562 1279l.5 1 1 .5-1 .5-.5 1-.5-1-1-.5 1-.5z M1578 1287l.5 1 1 .5-1 .5-.5 1-.5-1-1-.5 1-.5z"/>
        <!-- move -->
        <path d="M1612.4 1277 L1616 1281 H1613.6 V1285.2 H1617.8 V1282.8 L1621.8 1286.4 L1617.8 1290 V1287.6 H1613.6 V1291.8 H1616 L1612.4 1295.8 L1608.8 1291.8 H1611.2 V1287.6 H1607 V1290 L1603 1286.4 L1607 1282.8 V1285.2 H1611.2 V1281 H1608.8Z"/>
        <!-- gears -->
        <circle cx="1693" cy="1287" r="5"/><circle cx="1703.5" cy="1280" r="3"/><circle cx="1703.5" cy="1293.5" r="3"/>
        <g transform="translate(1693 1287)"><rect x="-1.6" y="-7.5" width="3.2" height="15"/><rect x="-1.6" y="-7.5" width="3.2" height="15" transform="rotate(45)"/><rect x="-1.6" y="-7.5" width="3.2" height="15" transform="rotate(90)"/><rect x="-1.6" y="-7.5" width="3.2" height="15" transform="rotate(135)"/></g>
        <!-- gear right -->
        <path d="M2108.46 1281.82 L2111.02 1281.86 L2111.02 1285.74 L2108.46 1285.78 L2107.53 1288.03 L2109.31 1289.87 L2106.57 1292.61 L2104.73 1290.83 L2102.48 1291.76 L2102.44 1294.32 L2098.56 1294.32 L2098.52 1291.76 L2096.27 1290.83 L2094.43 1292.61 L2091.69 1289.87 L2093.47 1288.03 L2092.54 1285.78 L2089.98 1285.74 L2089.98 1281.86 L2092.54 1281.82 L2093.47 1279.57 L2091.69 1277.73 L2094.43 1274.99 L2096.27 1276.77 L2098.52 1275.84 L2098.56 1273.28 L2102.44 1273.28 L2102.48 1275.84 L2104.73 1276.77 L2106.57 1274.99 L2109.31 1277.73 L2107.53 1279.57Z M2103.90 1283.80 A3.4 3.4 0 1 0 2097.10 1283.80 A3.4 3.4 0 1 0 2103.90 1283.80Z" fill-rule="evenodd"/>
        <!-- lock -->
        <rect x="1964" y="1282.8" width="14.2" height="10.2" rx="1"/>
      </g>
      <circle cx="1693" cy="1287" r="2" fill="#f2f2f2"/><circle cx="1703.5" cy="1280" r="1.2" fill="#f2f2f2"/><circle cx="1703.5" cy="1293.5" r="1.2" fill="#f2f2f2"/>
      
      <path d="M1975.5 1283 V1280 a4.6 4.6 0 0 1 9.2 0 V1283" fill="none" stroke="#000" stroke-width="2.4"/>
      <text x="1654.5" y="1295.5" font-family="Liberation Serif" font-weight="bold" font-size="26" text-anchor="middle" fill="#000">A</text>
      <g stroke="#000" fill="none" stroke-width="1.6">
        <path d="M1728.5 1277v18M1748.5 1277v18M1732 1277h13M1732 1295h13M1738.5 1277v18M1729 1286h19M1731 1283.5l-2.5 2.5 2.5 2.5M1746 1283.5l2.5 2.5-2.5 2.5"/>
        <path d="M2013 1277 h14 q-2 3 0 7 q2 5 -1 8 h-13" stroke-width="1.8"/>
        <circle cx="2058.4" cy="1283.8" r="9.6" stroke-width="1.8"/>
      </g>
      <circle cx="2058.4" cy="1283.8" r="3.6" fill="#000"/><circle cx="2058.4" cy="1283.8" r="6.3" fill="none" stroke="#000" stroke-width="1.5"/>
      <path d="M2007.5 1287 l12 -5 l2 3.5 l-12 5z" fill="#000"/>
    </svg>
    <!-- labels -->
    <div class="a" style="left:1414px;top:0;width:352px;height:0">
      <div class="t" style="right:0;top:1329px;font-size:26px;letter-spacing:.6px;color:#111">Name</div>
      <div class="t" style="right:0;top:1385px;font-size:26px;letter-spacing:.6px;color:#111">Style</div>
      <div class="t" style="right:0;top:1585px;font-size:26px;letter-spacing:.6px;color:#111">Orientation</div>
      <div class="t" style="right:0;top:1641px;font-size:26px;letter-spacing:.6px;color:#111">Start value</div>
      <div class="t" style="right:0;top:1698px;font-size:26px;letter-spacing:.6px;color:#111">End value</div>
      <div class="t" style="right:0;top:1753px;font-size:26px;letter-spacing:.6px;color:#111">Current value</div>
      <div class="t" style="right:0;top:1846px;font-size:26px;letter-spacing:.6px;color:#111">Value format</div>
      <div class="t" style="right:0;top:1902px;font-size:26px;letter-spacing:.6px;color:#111">Scroll distance on bar click</div>
    </div>
    <!-- name field -->
    <div class="a" style="left:1785px;top:1317.5px;width:334.5px;height:46.5px;background:#fff;border:2px solid #a9c3ea"></div>
    <div class="a" style="left:1800.5px;top:1325px;width:99.5px;height:31px;background:#b4d5fe"></div>
    <div class="t" style="left:1800.5px;top:1329px;font-size:26px;letter-spacing:-.2px;color:#111">Scrollbar</div>
    <!-- style popup -->
    <div class="a" style="left:1785.5px;top:1373px;width:333.5px;height:40px;border-radius:7px;background:#fff;border:1px solid #cfcfcf;box-shadow:0 1px 1px rgba(0,0,0,.12)"></div>
    <div class="a" style="left:2086px;top:1373px;width:33px;height:40px;border-radius:0 7px 7px 0;background:linear-gradient(#6a9cf8,#2a64f0)"></div>
    <svg class="a" style="left:2086px;top:1373px" width="33" height="40" viewBox="0 0 33 40"><path d="M10.5 15 L16.5 9 L22.5 15 M10.5 24 L16.5 30 L22.5 24" fill="none" stroke="#fff" stroke-width="2.3"/></svg>
    <div class="t" style="left:1815px;top:1383px;font-size:26.5px;letter-spacing:.5px;color:#111">scale</div>
    <!-- checkboxes -->
    <div class="a" style="left:1786px;top:1432px;width:24px;height:24px;border-radius:5px;background:linear-gradient(#5a92f2,#3f78e6)"></div>
    <div class="a" style="left:1786px;top:1504.5px;width:24px;height:24px;border-radius:5px;background:linear-gradient(#5a92f2,#3f78e6)"></div>
    <svg class="a" style="left:1786px;top:1432px" width="24" height="100" viewBox="0 0 24 100"><path d="M5.5 12.5 l4.5 5 l8-11 M5.5 85 l4.5 5 l8-11" fill="none" stroke="#fff" stroke-width="2.4"/></svg>
    <div class="a" style="left:1786px;top:1468.5px;width:24px;height:23px;border-radius:5px;background:#fff;border:1px solid #bdbdbd;box-shadow:0 .5px 1px rgba(0,0,0,.15)"></div>
    <div class="a" style="left:1786px;top:1540.5px;width:24px;height:23px;border-radius:5px;background:#fff;border:1px solid #bdbdbd;box-shadow:0 .5px 1px rgba(0,0,0,.15)"></div>
    <div class="a" style="left:1786px;top:1800.5px;width:24px;height:23px;border-radius:5px;background:#fff;border:1px solid #bdbdbd;box-shadow:0 .5px 1px rgba(0,0,0,.15)"></div>
    <div class="t" style="left:1839px;top:1431px;font-size:26px;letter-spacing:.6px;color:#111">Visible</div>
    <div class="t" style="left:1839px;top:1467px;font-size:26px;letter-spacing:.6px;color:#111">Disabled</div>
    <div class="t" style="left:1839px;top:1503px;font-size:26px;letter-spacing:.6px;color:#111">Focus with keyboard</div>
    <div class="t" style="left:1839px;top:1539px;font-size:26px;letter-spacing:.6px;color:#111">Focus border</div>
    <div class="t" style="left:1839px;top:1799px;font-size:26px;letter-spacing:.6px;color:#111">Show value</div>
    <!-- orientation popup -->
    <div class="a" style="left:1785.5px;top:1573.5px;width:333.5px;height:39.5px;border-radius:7px;background:#fff;border:1px solid #dedede;box-shadow:0 1px 1px rgba(0,0,0,.08)"></div>
    <svg class="a" style="left:2086px;top:1573px" width="33" height="40" viewBox="0 0 33 40"><path d="M10.5 15 L16.5 9 L22.5 15 M10.5 24 L16.5 30 L22.5 24" fill="none" stroke="#9a9a9a" stroke-width="2.3"/></svg>
    <div class="t" style="left:1815px;top:1584px;font-size:26.5px;letter-spacing:.5px;color:#9a9a9a">Horizontal</div>
    <!-- value fields -->
    <div class="a" style="left:1785px;top:1630px;width:198px;height:46px;background:#fff;border:1.5px solid #c8c8c8"></div>
    <div class="a" style="left:1785px;top:1686px;width:198px;height:45.5px;background:#fff;border:1.5px solid #c8c8c8"></div>
    <div class="a" style="left:1785px;top:1742px;width:198px;height:45px;background:#fff;border:1.5px solid #c8c8c8"></div>
    <div class="a" style="left:1785px;top:1834px;width:334px;height:45.5px;background:#fff;border:1.5px solid #c8c8c8"></div>
    <div class="a" style="left:1785px;top:1890.5px;width:198px;height:44.5px;background:#fff;border:1.5px solid #c8c8c8"></div>
    <div class="t" style="left:1802px;top:1641px;font-size:26px;color:#111">1</div>
    <div class="t" style="left:1801px;top:1697px;font-size:26px;letter-spacing:.6px;color:#111">360</div>
    <div class="t" style="left:1802px;top:1753px;font-size:26px;color:#111">1</div>
    <div class="t" style="left:1802px;top:1901px;font-size:26px;color:#111">1</div>
    <!-- steppers -->
    <svg class="a" style="left:1994px;top:1628px" width="30" height="164" viewBox="1994 1628 30 164">
      <g fill="#fff" stroke="#cfcfcf" stroke-width="1">
        <rect x="1997.5" y="1633" width="23" height="41" rx="7"/>
        <rect x="1997.5" y="1689" width="23" height="41" rx="7"/>
        <rect x="1997.5" y="1745" width="23" height="41" rx="7"/>
      </g>
      <path d="M2004.5 1648 l4.5-4.5 4.5 4.5 M2004.5 1659 l4.5 4.5 4.5-4.5 M2004.5 1704 l4.5-4.5 4.5 4.5 M2004.5 1715 l4.5 4.5 4.5-4.5 M2004.5 1760 l4.5-4.5 4.5 4.5 M2004.5 1771 l4.5 4.5 4.5-4.5" fill="none" stroke="#333" stroke-width="1.8"/>
    </svg>
  </div>
</div>

</body></html>
